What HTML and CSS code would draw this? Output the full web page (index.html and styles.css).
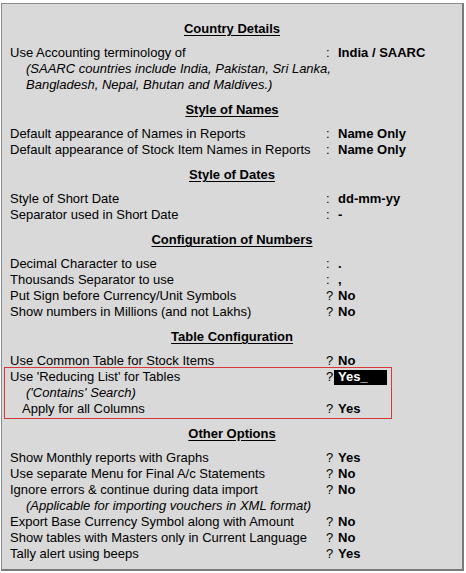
FILE: index.html
```html
<!DOCTYPE html>
<html>
<head>
<meta charset="utf-8">
<link rel="stylesheet" href="styles.css">
</head>
<body>
<div class="panel">
  <div class="heading"><span>Country Details</span></div>
  <div class="row"><span class="label">Use Accounting terminology of</span><span class="sep">:</span><span class="value">India / SAARC</span></div>
  <div class="note">(SAARC countries include India, Pakistan, Sri Lanka,</div>
  <div class="note">Bangladesh, Nepal, Bhutan and Maldives.)</div>

  <div class="heading"><span>Style of Names</span></div>
  <div class="row"><span class="label">Default appearance of Names in Reports</span><span class="sep">:</span><span class="value">Name Only</span></div>
  <div class="row"><span class="label">Default appearance of Stock Item Names in Reports</span><span class="sep">:</span><span class="value">Name Only</span></div>

  <div class="heading"><span>Style of Dates</span></div>
  <div class="row"><span class="label">Style of Short Date</span><span class="sep">:</span><span class="value">dd-mm-yy</span></div>
  <div class="row"><span class="label">Separator used in Short Date</span><span class="sep">:</span><span class="value">-</span></div>

  <div class="heading"><span>Configuration of Numbers</span></div>
  <div class="row"><span class="label">Decimal Character to use</span><span class="sep">:</span><span class="value">.</span></div>
  <div class="row"><span class="label">Thousands Separator to use</span><span class="sep">:</span><span class="value">,</span></div>
  <div class="row"><span class="label">Put Sign before Currency/Unit Symbols</span><span class="sep">?</span><span class="value">No</span></div>
  <div class="row"><span class="label">Show numbers in Millions (and not Lakhs)</span><span class="sep">?</span><span class="value">No</span></div>

  <div class="heading"><span>Table Configuration</span></div>
  <div class="row"><span class="label">Use Common Table for Stock Items</span><span class="sep">?</span><span class="value">No</span></div>
  <div class="marked">
    <div class="row"><span class="label">Use 'Reducing List' for Tables</span><span class="sep">?</span><span class="value"><span class="active">Yes_</span></span></div>
    <div class="note">('Contains' Search)</div>
    <div class="row"><span class="label sub">Apply for all Columns</span><span class="sep">?</span><span class="value">Yes</span></div>
  </div>

  <div class="heading"><span>Other Options</span></div>
  <div class="row"><span class="label">Show Monthly reports with Graphs</span><span class="sep">?</span><span class="value">Yes</span></div>
  <div class="row"><span class="label">Use separate Menu for Final A/c Statements</span><span class="sep">?</span><span class="value">No</span></div>
  <div class="row"><span class="label">Ignore errors &amp; continue during data import</span><span class="sep">?</span><span class="value">No</span></div>
  <div class="note">(Applicable for importing vouchers in XML format)</div>
  <div class="row"><span class="label">Export Base Currency Symbol along with Amount</span><span class="sep">?</span><span class="value">No</span></div>
  <div class="row"><span class="label">Show tables with Masters only in Current Language</span><span class="sep">?</span><span class="value">No</span></div>
  <div class="row"><span class="label">Tally alert using beeps</span><span class="sep">?</span><span class="value">Yes</span></div>
</div>
</body>
</html>
```

FILE: styles.css
```css
html, body {
  margin: 0;
  padding: 0;
  background: #ffffff;
}

body {
  font-family: "Liberation Sans", Arial, sans-serif;
  font-size: 13px;
  line-height: 16px;
  color: #000000;
}

.panel {
  box-sizing: border-box;
  margin: 3px 0 0 1px;
  width: 463px;
  height: 568px;
  background: #d9d9d9;
  border: 1px solid #8c8c8c;
  border-right: 2px solid #7a7a7a;
  border-bottom: 2px solid #7a7a7a;
  padding: 8px 0 0 8px;
}

.heading {
  text-align: center;
  font-weight: bold;
  margin: 9px 0 8px -8px;
  height: 16px;
}

.heading span {
  text-decoration: underline;
  text-underline-offset: 2px;
}

.row {
  display: grid;
  grid-template-columns: 314px 14px auto;
  height: 16px;
  white-space: nowrap;
}

.label.sub {
  padding-left: 12px;
}

.sep {
  padding-left: 2px;
}

.value {
  font-weight: bold;
}

.active {
  display: inline-block;
  background: #000000;
  color: #ffffff;
  width: 45px;
  margin-left: -4px;
  padding: 0 4px;
  height: 15px;
  margin-top: 1px;
  line-height: 14px;
}

.note {
  font-style: italic;
  padding-left: 16px;
  height: 16px;
  white-space: nowrap;
}

.marked {
  border: 1px solid #d23a3a;
  margin: -2px 0 -2px -6px;
  padding: 1px 0 1px 5px;
  width: 381px;
}
```
